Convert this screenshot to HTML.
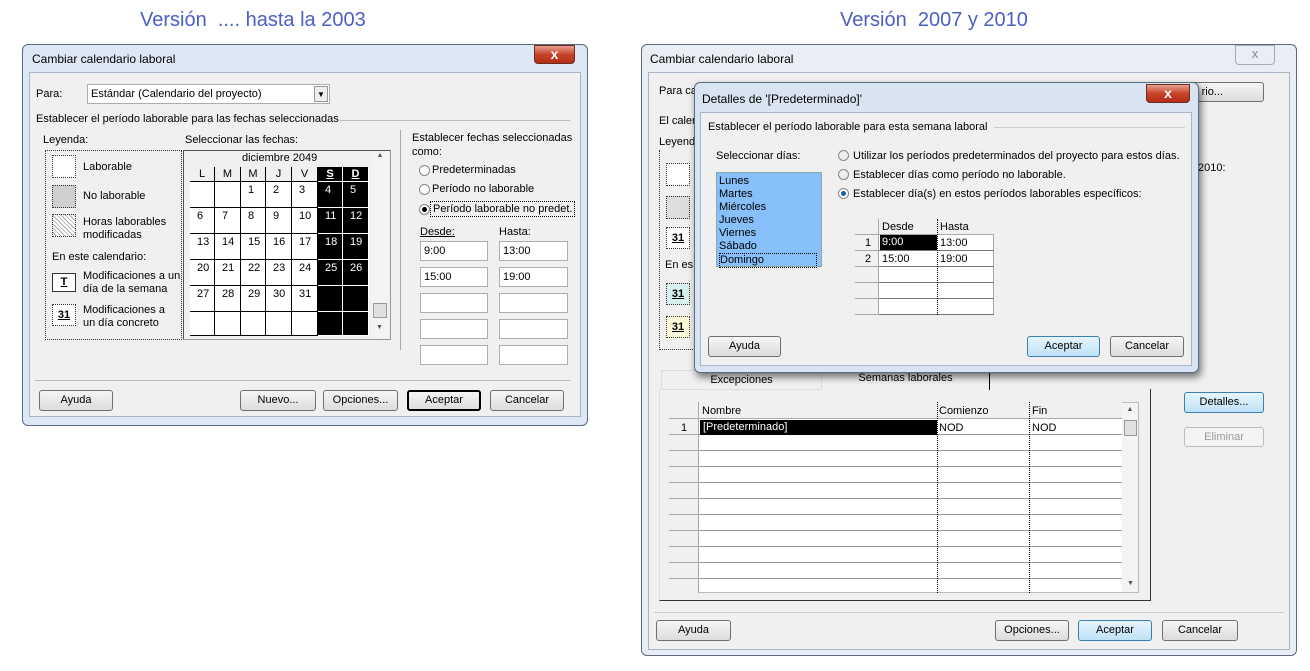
<!DOCTYPE html><html><head><meta charset="utf-8"><style>
*{margin:0;padding:0;box-sizing:border-box}
body{width:1310px;height:671px;background:#fff;position:relative;overflow:hidden;font-family:"Liberation Sans",sans-serif;font-size:11px;color:#000}
.a{position:absolute;white-space:nowrap}
.frame{background:#dde8f4;border:1px solid #5a6a80;border-radius:6px}
.client{background:#f0f0f0;border:1px solid #a9b6c6}
.btn{position:absolute;background:linear-gradient(#f6f6f6,#dcdcdc);border:1px solid #707070;border-radius:3px;text-align:center;font-size:11px}
.btnb{background:linear-gradient(#e6f4fc,#bfe2f7);border:1px solid #3c7fb1}
.inp{position:absolute;background:#fff;border:1px solid #abadb3}
.close{position:absolute;background:linear-gradient(#e8a08f,#c7432b 50%,#b32e16);border:1px solid #6d2c20;border-radius:0 0 4px 4px;color:#fff;font-weight:bold;text-align:center;font-size:14px}
.rad{position:absolute;width:11px;height:11px;border-radius:50%;border:1px solid #888;background:#fff}
.cell{position:absolute;border-right:1px solid #000;border-bottom:1px solid #000;background:#fff;padding:2px 0 0 7px;font-size:11px}
.blk{background:#000;color:#fff;border-color:#fff}
.h1{position:absolute;color:#4b5fc4;font-size:20px}
</style></head><body>
<div class="h1" style="left:140px;top:9px">Versión&nbsp; .... hasta la 2003</div>
<div class="h1" style="left:840px;top:9px">Versión&nbsp; 2007 y 2010</div>

<div class="a frame" style="left:22px;top:44px;width:566px;height:382px"></div>
<div class="a" style="left:32px;top:52px;font-size:12px">Cambiar calendario laboral</div>
<div class="close" style="left:534px;top:45px;width:41px;height:19px">x</div>
<div class="a client" style="left:29px;top:72px;width:552px;height:345px"></div>
<div class="a" style="left:36px;top:88px">Para:</div>
<div class="inp" style="left:87px;top:84px;width:243px;height:20px;padding:3px 3px">Estándar (Calendario del proyecto)</div>
<div class="a" style="left:314px;top:86px;width:14px;height:16px;background:#eee;border:1px solid #999;font-size:8px;text-align:center;line-height:15px">▼</div>
<div class="a" style="left:36px;top:113px">Establecer el período laborable para las fechas seleccionadas</div>
<div class="a" style="left:340px;top:120px;width:230px;border-top:1px solid #bbb"></div>
<div class="a" style="left:43px;top:134px">Leyenda:</div>
<div class="a" style="left:45px;top:150px;width:137px;height:190px;border:1px dotted #333"></div>
<div class="a" style="left:52px;top:155px;width:24px;height:23px;border:1px dotted #333;background:#fff"></div>
<div class="a" style="left:83px;top:161px">Laborable</div>
<div class="a" style="left:52px;top:185px;width:24px;height:23px;border:1px dotted #333;background:#cfcfcf"></div>
<div class="a" style="left:83px;top:190px">No laborable</div>
<div class="a" style="left:52px;top:214px;width:24px;height:23px;border:1px dotted #333;background:repeating-linear-gradient(45deg,#fff 0 2px,#aaa 2px 3px)"></div>
<div class="a" style="left:83px;top:216px;line-height:13px">Horas laborables<br>modificadas</div>
<div class="a" style="left:52px;top:251px">En este calendario:</div>
<div class="a" style="left:52px;top:273px;width:24px;height:19px;border:1px solid #333;background:#fff;text-align:center;font-weight:bold;text-decoration:underline;line-height:17px">T</div>
<div class="a" style="left:83px;top:270px;line-height:13px">Modificaciones a un<br>día de la semana</div>
<div class="a" style="left:52px;top:304px;width:24px;height:22px;border:1px dotted #333;background:#fff;text-align:center;font-weight:bold;text-decoration:underline;line-height:20px">31</div>
<div class="a" style="left:83px;top:304px;line-height:13px">Modificaciones a<br>un día concreto</div>
<div class="a" style="left:185px;top:134px">Seleccionar las fechas:</div>
<div class="a" style="left:183px;top:150px;width:208px;height:190px;border:1px solid #999;border-left-color:#555;border-top-color:#555;background:#f0f0f0"></div>
<div class="a" style="left:242px;top:152px">diciembre 2049</div>
<div class="a" style="left:372px;top:152px;width:16px;height:186px;background:#f4f4f4;font-size:7px;color:#555;text-align:center">▲</div>
<div class="a" style="left:373px;top:303px;width:14px;height:15px;background:#e0e0e0;border:1px solid #999"></div>
<div class="a" style="left:376px;top:324px;font-size:7px;color:#555">▼</div>
<div id="cal"></div>
<div class="a" style="left:400px;top:130px;height:220px;border-left:1px solid #aaa"></div>
<div class="a" style="left:412px;top:131px;line-height:14px">Establecer fechas seleccionadas<br>como:</div>
<div class="rad" style="left:419px;top:165px"></div><div class="a" style="left:432px;top:164px">Predeterminadas</div>
<div class="rad" style="left:419px;top:184px"></div><div class="a" style="left:432px;top:183px">Período no laborable</div>
<div class="rad" style="left:419px;top:204px"></div><div class="a" style="left:422px;top:207px;width:5px;height:5px;border-radius:50%;background:#000"></div>
<div class="a" style="left:430px;top:201px;border:1px dotted #000;padding:1px 2px">Período laborable no predet.</div>
<div class="a" style="left:420px;top:226px;text-decoration:underline">Desde:</div>
<div class="a" style="left:499px;top:226px">Hasta:</div>
<div class="inp" style="left:420px;top:241px;width:68px;height:20px;padding:3px 3px">9:00</div>
<div class="inp" style="left:499px;top:241px;width:69px;height:20px;padding:3px 3px">13:00</div>
<div class="inp" style="left:420px;top:267px;width:68px;height:20px;padding:3px 3px">15:00</div>
<div class="inp" style="left:499px;top:267px;width:69px;height:20px;padding:3px 3px">19:00</div>
<div class="inp" style="left:420px;top:293px;width:68px;height:20px"></div><div class="inp" style="left:499px;top:293px;width:69px;height:20px"></div>
<div class="inp" style="left:420px;top:319px;width:68px;height:20px"></div><div class="inp" style="left:499px;top:319px;width:69px;height:20px"></div>
<div class="inp" style="left:420px;top:345px;width:68px;height:20px"></div><div class="inp" style="left:499px;top:345px;width:69px;height:20px"></div>
<div class="a" style="left:35px;top:380px;width:535px;border-top:1px solid #bbb"></div>
<div class="btn" style="left:39px;top:390px;width:74px;height:21px;line-height:19px">Ayuda</div>
<div class="btn" style="left:240px;top:390px;width:76px;height:21px;line-height:19px">Nuevo...</div>
<div class="btn" style="left:323px;top:390px;width:75px;height:21px;line-height:19px">Opciones...</div>
<div class="btn" style="left:407px;top:390px;width:74px;height:21px;line-height:17px;border:2px solid #000">Aceptar</div>
<div class="btn" style="left:490px;top:390px;width:74px;height:21px;line-height:19px">Cancelar</div>

<div class="a frame" style="left:641px;top:44px;width:656px;height:612px;background:#e9eef5"></div>
<div class="a" style="left:650px;top:52px;font-size:12px">Cambiar calendario laboral</div>
<div class="a" style="left:1235px;top:45px;width:40px;height:20px;border:1px solid #aab;border-radius:0 0 4px 4px;color:#888;text-align:center;font-size:13px">x</div>
<div class="a client" style="left:648px;top:72px;width:642px;height:578px"></div>
<div class="a" style="left:659px;top:85px">Para ca</div>
<div class="btn" style="left:1095px;top:82px;width:169px;height:20px;line-height:18px;text-align:right;padding-right:40px">rio...</div>
<div class="a" style="left:659px;top:115px">El calen</div>
<div class="a" style="left:659px;top:136px">Leyend</div>
<div class="a" style="left:659px;top:150px;width:40px;height:200px;border-left:1px dotted #333;border-bottom:1px dotted #333"></div>
<div class="a" style="left:666px;top:163px;width:24px;height:23px;border:1px dotted #333;background:#fff"></div>
<div class="a" style="left:666px;top:196px;width:24px;height:23px;border:1px dotted #333;background:#ddd"></div>
<div class="a" style="left:666px;top:227px;width:24px;height:22px;border:1px dotted #333;background:#fff;font-weight:bold;text-decoration:underline;text-align:center;line-height:20px">31</div>
<div class="a" style="left:665px;top:259px">En es</div>
<div class="a" style="left:666px;top:283px;width:24px;height:22px;border:1px dotted #333;background:#d6f0ee;font-weight:bold;text-decoration:underline;text-align:center;line-height:20px">31</div>
<div class="a" style="left:666px;top:316px;width:24px;height:22px;border:1px dotted #333;background:#fafad8;font-weight:bold;text-decoration:underline;text-align:center;line-height:20px">31</div>
<div class="a" style="left:1198px;top:162px">2010:</div>
<div class="a" style="left:661px;top:370px;width:161px;height:20px;background:#f0f0f0;border:1px solid #ddd;text-align:center;padding-top:3px">Excepciones</div>
<div class="a" style="left:822px;top:368px;width:168px;height:22px;background:#f0f0f0;border-right:1px solid #000;text-align:center;padding-top:4px">Semanas laborales</div>
<div class="a" style="left:659px;top:389px;width:492px;height:212px;border-right:1px solid #333;border-bottom:1px solid #333;border-left:1px solid #ddd"></div>
<div class="a" style="left:669px;top:402px;width:470px;height:191px;background:#fff;border:1px solid #bbb"></div>
<div class="a" style="left:669px;top:402px;width:30px;height:191px;background:#f0f0f0;border-right:1px solid #aaa;background-image:repeating-linear-gradient(#f0f0f0 0 15px,#aaa 15px 16px);background-position:0 1px"></div>
<div class="a" style="left:699px;top:402px;width:423px;height:17px;background:#f0f0f0;border-bottom:1px solid #aaa"></div>
<div class="a" style="left:699px;top:419px;width:423px;height:174px;background-image:repeating-linear-gradient(transparent 0 15px,#555 15px 16px);opacity:.6"></div>
<div class="a" style="left:937px;top:402px;height:191px;border-left:1px dotted #000"></div>
<div class="a" style="left:1029px;top:402px;height:191px;border-left:1px dotted #000"></div>
<div class="a" style="left:702px;top:405px">Nombre</div><div class="a" style="left:939px;top:405px">Comienzo</div><div class="a" style="left:1032px;top:405px">Fin</div>
<div class="a" style="left:681px;top:422px">1</div>
<div class="a" style="left:700px;top:420px;width:237px;height:15px;background:#000;color:#fff;padding:1px 3px">[Predeterminado]</div>
<div class="a" style="left:939px;top:422px">NOD</div><div class="a" style="left:1032px;top:422px">NOD</div>
<div class="a" style="left:1122px;top:403px;width:16px;height:189px;background:#f4f4f4;font-size:7px;text-align:center;color:#555;padding-top:3px">▲</div>
<div class="a" style="left:1124px;top:420px;width:13px;height:16px;background:#e0e0e0;border:1px solid #999"></div>
<div class="a" style="left:1127px;top:580px;font-size:7px;color:#555">▼</div>
<div class="btn btnb" style="left:1184px;top:392px;width:80px;height:21px;line-height:19px">Detalles...</div>
<div class="btn" style="left:1184px;top:427px;width:80px;height:20px;line-height:18px;color:#999;border-color:#bbb;background:#f4f4f4">Eliminar</div>
<div class="a" style="left:654px;top:612px;width:630px;border-top:1px solid #ccc"></div>
<div class="btn" style="left:656px;top:620px;width:75px;height:21px;line-height:19px">Ayuda</div>
<div class="btn" style="left:995px;top:620px;width:74px;height:21px;line-height:19px">Opciones...</div>
<div class="btn btnb" style="left:1078px;top:620px;width:74px;height:21px;line-height:19px">Aceptar</div>
<div class="btn" style="left:1162px;top:620px;width:76px;height:21px;line-height:19px">Cancelar</div>

<div class="a frame" style="left:694px;top:82px;width:505px;height:291px;background:#d8e4f2;box-shadow:2px 4px 8px rgba(0,0,0,.55)"></div>
<div class="a" style="left:702px;top:92px;font-size:12px">Detalles de '[Predeterminado]'</div>
<div class="close" style="left:1146px;top:84px;width:44px;height:19px">x</div>
<div class="a client" style="left:700px;top:112px;width:492px;height:254px"></div>
<div class="a" style="left:708px;top:121px">Establecer el período laborable para esta semana laboral</div>
<div class="a" style="left:994px;top:127px;width:191px;border-top:1px solid #ccc"></div>
<div class="a" style="left:716px;top:150px">Seleccionar días:</div>
<div class="a" style="left:716px;top:172px;width:106px;height:95px;background:#86bff9;border:1px solid #8aa;padding:2px 2px;line-height:13px">Lunes<br>Martes<br>Miércoles<br>Jueves<br>Viernes<br>Sábado<br><span style="border:1px dotted #000;display:inline-block;width:98px">Domingo</span></div>
<div class="rad" style="left:838px;top:150px;background:#eee"></div><div class="a" style="left:853px;top:150px">Utilizar los períodos predeterminados del proyecto para estos días.</div>
<div class="rad" style="left:838px;top:169px;background:#eee"></div><div class="a" style="left:853px;top:169px">Establecer días como período no laborable.</div>
<div class="rad" style="left:838px;top:188px"></div><div class="a" style="left:841px;top:191px;width:5px;height:5px;border-radius:50%;background:#1a5fa8"></div><div class="a" style="left:853px;top:188px">Establecer día(s) en estos períodos laborables específicos:</div>
<div class="a" style="left:855px;top:219px;width:139px;height:96px;background:#fff;border:1px solid #aaa"></div>
<div class="a" style="left:855px;top:219px;width:24px;height:96px;background:#f0f0f0;border-right:1px solid #aaa;background-image:repeating-linear-gradient(#f0f0f0 0 15px,#aaa 15px 16px)"></div>
<div class="a" style="left:879px;top:219px;width:115px;height:16px;background:#f0f0f0;border-bottom:1px solid #aaa"></div>
<div class="a" style="left:879px;top:235px;width:115px;height:80px;background-image:repeating-linear-gradient(transparent 0 15px,#777 15px 16px)"></div>
<div class="a" style="left:937px;top:219px;height:96px;border-left:1px dotted #000"></div>
<div class="a" style="left:882px;top:221px">Desde</div><div class="a" style="left:940px;top:221px">Hasta</div>
<div class="a" style="left:865px;top:237px">1</div><div class="a" style="left:865px;top:253px">2</div>
<div class="a" style="left:880px;top:235px;width:57px;height:15px;background:#000;color:#fff;padding:1px 2px">9:00</div>
<div class="a" style="left:940px;top:237px">13:00</div>
<div class="a" style="left:882px;top:253px">15:00</div><div class="a" style="left:940px;top:253px">19:00</div>
<div class="btn" style="left:708px;top:336px;width:73px;height:21px;line-height:19px">Ayuda</div>
<div class="btn btnb" style="left:1027px;top:336px;width:73px;height:21px;line-height:19px">Aceptar</div>
<div class="btn" style="left:1110px;top:336px;width:74px;height:21px;line-height:19px">Cancelar</div>

<script>
var c=document.getElementById('cal'),h='';
var xs=[190,215,241,266,292,318,343,369],hd=['L','M','M','J','V','S','D'];
var d=[[ '', '',1,2,3,4,5],[6,7,8,9,10,11,12],[13,14,15,16,17,18,19],[20,21,22,23,24,25,26],[27,28,29,30,31,'',''],['','','','','','','']];
for(var i=0;i<7;i++){var w=xs[i+1]-xs[i];var b=i>4?' blk':'';
h+='<div class="cell'+b+'" style="left:'+xs[i]+'px;top:167px;width:'+w+'px;height:15px;padding:1px 0 0 0;text-align:center;'+(i>4?'font-weight:bold;text-decoration:underline;':'background:#f0f0f0;')+'">'+hd[i]+'</div>';
for(var r=0;r<6;r++){var hh=r==5?24:26;h+='<div class="cell'+b+'" style="left:'+xs[i]+'px;top:'+(182+r*26)+'px;width:'+w+'px;height:'+hh+'px">'+d[r][i]+'</div>';}}
c.innerHTML=h;
</script>
</body></html>
